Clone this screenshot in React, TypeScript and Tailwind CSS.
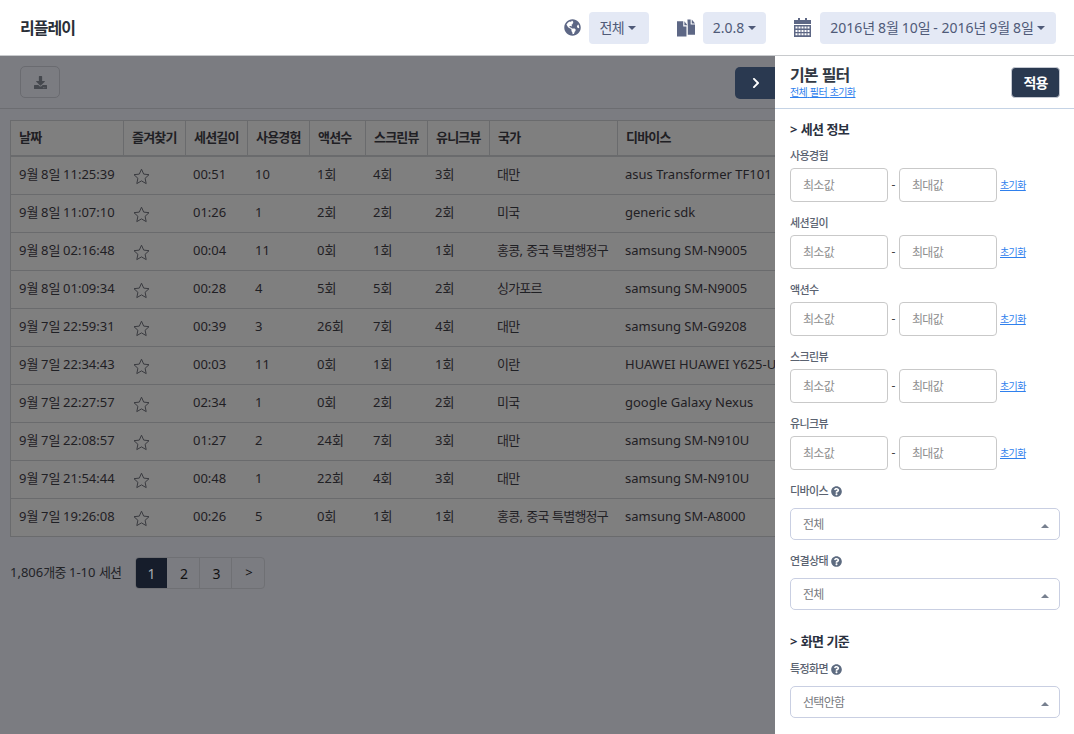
import React from "react";
import { FaGlobeAmericas, FaDownload, FaQuestionCircle, FaChevronRight } from "react-icons/fa";

const heads = ["날짜", "즐겨찾기", "세션길이", "사용경험", "액션수", "스크린뷰", "유니크뷰", "국가", "디바이스"];
const rows = [
  ["9월 8일 11:25:39", "00:51", "10", "1회", "4회", "3회", "대만", "asus Transformer TF101"],
  ["9월 8일 11:07:10", "01:26", "1", "2회", "2회", "2회", "미국", "generic sdk"],
  ["9월 8일 02:16:48", "00:04", "11", "0회", "1회", "1회", "홍콩, 중국 특별행정구", "samsung SM-N9005"],
  ["9월 8일 01:09:34", "00:28", "4", "5회", "5회", "2회", "싱가포르", "samsung SM-N9005"],
  ["9월 7일 22:59:31", "00:39", "3", "26회", "7회", "4회", "대만", "samsung SM-G9208"],
  ["9월 7일 22:34:43", "00:03", "11", "0회", "1회", "1회", "이란", "HUAWEI HUAWEI Y625-U32"],
  ["9월 7일 22:27:57", "02:34", "1", "0회", "2회", "2회", "미국", "google Galaxy Nexus"],
  ["9월 7일 22:08:57", "01:27", "2", "24회", "7회", "3회", "대만", "samsung SM-N910U"],
  ["9월 7일 21:54:44", "00:48", "1", "22회", "4회", "3회", "대만", "samsung SM-N910U"],
  ["9월 7일 19:26:08", "00:26", "5", "0회", "1회", "1회", "홍콩, 중국 특별행정구", "samsung SM-A8000"],
];

/* Hangul runs are set slightly tighter than the Latin text beside them. */
function K({ children }: { children: string }) {
  return (
    <>
      {children.split(/([\uAC00-\uD7A3]+)/).map((part, i) =>
        i % 2 === 1 ? (
          <span key={i} className="tracking-[-0.06em]">{part}</span>
        ) : (
          part
        ),
      )}
    </>
  );
}

function Files() {
  return (
    <svg width="18" height="20" viewBox="0 0 19 20" fill="#5d6785">
      <path d="M0 3h6.6v5.4H10V19H0z" />
      <path d="M7.8 3v4.2H11z" />
      <path d="M11 1h3.4v5.4H19V17h-7.6V7.4z" />
      <path d="M15.6 1v4.2H19z" />
    </svg>
  );
}

function Calendar() {
  return (
    <svg width="17" height="19" viewBox="0 0 17 19" fill="#5d6785">
      <path d="M4 0h2v2h5V0h2v2h4v4H0V2h4z" />
      <path fillRule="evenodd" d="M0 7h17v12H0zM1.5 8.5v2h2v-2zm3 0v2h2v-2zm3 0v2h2v-2zm3 0v2h2v-2zm3 0v2h2v-2zM1.5 12v2h2v-2zm3 0v2h2v-2zm3 0v2h2v-2zm3 0v2h2v-2zm3 0v2h2v-2zM1.5 15.3v2h2v-2zm3 0v2h2v-2zm3 0v2h2v-2zm3 0v2h2v-2zm3 0v2h2v-2z" />
    </svg>
  );
}

function StarOutline() {
  return (
    <svg width="17" height="17" viewBox="0 0 17 17" fill="none" stroke="#3a3b40" strokeWidth="1">
      <path d="M8.5 1.2l2.2 4.9 5.3.6-3.9 3.6 1.1 5.3-4.7-2.7-4.7 2.7 1.1-5.3L1 6.7l5.3-.6z" />
    </svg>
  );
}

function Pill({ children, pad }: { children: string; pad: string }) {
  return (
    <div className={"flex h-8 items-center gap-1 rounded-[4px] bg-[#e4e9f5] text-[14px] text-[#4f5a78] " + pad}>
      <span><K>{children}</K></span>
      <span className="h-0 w-0 border-x-[4px] border-t-[4px] border-x-transparent border-t-[#4f5a78]" />
    </div>
  );
}

function RangeFilter({ label }: { label: string }) {
  return (
    <div className="mb-[11px]">
      <div className="mb-[2px] h-5 text-[11px] leading-5 font-medium text-[#5a6270]"><K>{label}</K></div>
      <div className="flex h-[34px] items-center">
        <div className="flex h-[34px] w-[98px] items-center rounded-[4px] border border-[#c9c9c9] pt-[2px] pl-3 text-[12px] text-[#8f8f8f]"><K>최소값</K></div>
        <span className="w-[11px] text-center text-[12px] text-[#444]">-</span>
        <div className="flex h-[34px] w-[98px] items-center rounded-[4px] border border-[#c9c9c9] pt-[2px] pl-3 text-[12px] text-[#8f8f8f]"><K>최대값</K></div>
        <a className="ml-[3px] text-[10px] text-[#2f80ed] underline"><K>초기화</K></a>
      </div>
    </div>
  );
}

function SelectFilter({ label, value }: { label: string; value: string }) {
  return (
    <div className="mb-[11px]">
      <div className="mb-[7px] flex h-5 items-center gap-[3px] text-[11px] font-medium text-[#5a6270]">
        <span><K>{label}</K></span>
        <FaQuestionCircle className="text-[11px] text-[#5d6b80]" />
      </div>
      <div className="flex h-8 items-center justify-between rounded-[5px] border border-[#c9cfe2] pr-[10px] pl-3 text-[12px] text-[#77797e]">
        <span className="pt-[2px]"><K>{value}</K></span>
        <span className="mt-[3px] h-0 w-0 border-x-[4px] border-b-[4px] border-x-transparent border-b-[#77808f]" />
      </div>
    </div>
  );
}

export default function App() {
  return (
    <div className="flex h-screen flex-col overflow-hidden bg-white font-['Noto_Sans','Noto_Sans_CJK_KR',sans-serif]">
      <header className="flex h-14 shrink-0 items-center justify-between border-b border-[#c8cacd] bg-white pr-[18px] pl-5">
        <div className="text-[16px] font-bold text-[#2a2f38]"><K>리플레이</K></div>
        <div className="flex items-center">
          <FaGlobeAmericas className="mr-2 text-[17px] text-[#5d6785]" />
          <Pill pad="pr-[13px] pl-[11px]">전체</Pill>
          <div className="mr-2 ml-7"><Files /></div>
          <Pill pad="pr-[10px] pl-[10px]">2.0.8</Pill>
          <div className="mr-[9px] ml-7"><Calendar /></div>
          <Pill pad="pr-[11px] pl-[10px]">2016년 8월 10일 - 2016년 9월 8일</Pill>
        </div>
      </header>

      <div className="flex min-h-0 flex-1">
        <main className="min-w-0 flex-1 overflow-hidden bg-[#7b7c81]">
          <div className="flex h-[53px] items-center justify-between border-b border-[#6c6d71] pl-5">
            <div className="flex h-8 w-10 items-center justify-center rounded-[5px] border border-[#6a6b70]">
              <FaDownload className="text-[13px] text-[#45484e]" />
            </div>
            <div className="mt-[2px] flex h-8 w-10 items-center justify-center rounded-l-[5px] bg-[#2a3950] pl-[1px]">
              <FaChevronRight className="text-[12px] text-white" />
            </div>
          </div>

          <div className="mt-[11px] ml-[10px] w-[900px] text-[13px] text-[#1f2024]">
            <div className="grid h-[37px] grid-cols-[113px_62px_62px_62px_56px_62px_62px_128px_200px] border-t border-b-2 border-l border-[#6a6b6d] bg-[#7f7f7f] font-bold">
              {heads.map((h) => (
                <div key={h} className="flex items-center border-r border-[#6a6b6d] pl-2 whitespace-nowrap">
                  <K>{h}</K>
                </div>
              ))}
            </div>
            {rows.map((r) => (
              <div key={r[0]} className="grid h-[38px] grid-cols-[113px_62px_62px_62px_56px_62px_62px_128px_200px] items-center border-b border-l border-[#6a6b6d] bg-[#7f7f7f] pb-[2px]">
                <div className="pl-2 whitespace-nowrap"><K>{r[0]}</K></div>
                <div className="pt-1 pl-[9px]"><StarOutline /></div>
                {r.slice(1).map((c, i) => (
                  <div key={i} className="pl-[7px] whitespace-nowrap"><K>{c}</K></div>
                ))}
              </div>
            ))}
          </div>

          <div className="mt-5 ml-[10px] flex items-center text-[13px] text-[#222327]">
            <span className="w-[125px]"><K>1,806개중 1-10 세션</K></span>
            <div className="flex h-8 overflow-hidden rounded-[4px] border border-[#6f7074] text-[14px] text-[#111]">
              <div className="flex w-[31px] items-center justify-center bg-[#161d2b] text-[#a9abb0]">1</div>
              <div className="flex w-[33px] items-center justify-center border-r border-[#6f7074] pl-[2px]">2</div>
              <div className="flex w-8 items-center justify-center border-r border-[#6f7074] pl-[2px]">3</div>
              <div className="flex w-8 items-center justify-center pl-[2px] text-[13px]">&gt;</div>
            </div>
          </div>
        </main>

        <aside className="w-[299px] shrink-0 overflow-hidden bg-white">
          <div className="flex h-[53px] items-center justify-between border-b border-[#c5d3e5] pr-[14px] pl-[15px]">
            <div>
              <div className="text-[16px] leading-5 font-bold text-[#333a44]"><K>기본 필터</K></div>
              <a className="block text-[10px] leading-[14px] text-[#2f80ed] underline"><K>전체 필터 초기화</K></a>
            </div>
            <div className="flex h-[31px] w-[49px] items-center justify-center rounded-[4px] border border-[#c5c9d2] bg-[#2a3950] text-[14px] font-bold text-white"><K>적용</K></div>
          </div>
          <div className="pt-[10px] pr-[14px] pl-[15px]">
            <div className="mb-[7px] h-5 text-[13px] leading-5 font-bold text-[#2a3140]"><K>&gt; 세션 정보</K></div>
            <RangeFilter label="사용경험" />
            <RangeFilter label="세션길이" />
            <RangeFilter label="액션수" />
            <RangeFilter label="스크린뷰" />
            <RangeFilter label="유니크뷰" />
            <SelectFilter label="디바이스" value="전체" />
            <SelectFilter label="연결상태" value="전체" />
            <div className="mt-[21px] mb-[8px] h-5 text-[13px] leading-5 font-bold text-[#2a3140]"><K>&gt; 화면 기준</K></div>
            <SelectFilter label="특정화면" value="선택안함" />
          </div>
        </aside>
      </div>
    </div>
  );
}
